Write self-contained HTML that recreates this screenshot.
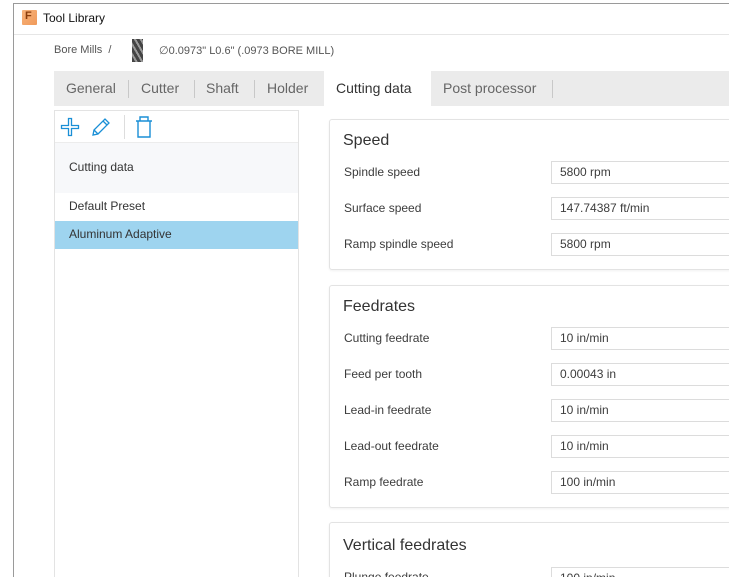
<!DOCTYPE html>
<html style="width:729px;height:577px;overflow:hidden"><head><style>
*{margin:0;padding:0;box-sizing:border-box}
body{width:729px;height:577px;overflow:hidden;background:#fff;font-family:"Liberation Sans",sans-serif;color:#3c3c3c;position:relative}
.abs{position:absolute}
.win{left:13px;top:3px;width:720px;height:580px;border:1px solid #9a9a9a;border-right:none;border-bottom:none;background:#fff}
.t{white-space:nowrap}
.tab{position:absolute;top:71px;height:35px;line-height:35px;font-size:14px;color:#666}
.sep{position:absolute;top:80px;width:1px;height:18px;background:#c8c8c8}
.card{position:absolute;left:329px;width:420px;border:1px solid #e3e3e3;border-radius:3px;background:#fff;box-shadow:0 1px 2px rgba(0,0,0,.06)}
.lbl{position:absolute;left:14px;font-size:12px;color:#3c3c3c}
.in{position:absolute;left:221px;width:200px;height:23px;border:1px solid #dcdcdc;font-size:12px;line-height:21px;padding-left:8px;color:#3c3c3c}
.h{position:absolute;left:13px;font-size:16px;color:#333}
</style></head><body>
<div class="abs win"></div>
<div class="abs" style="left:22px;top:10px;width:15px;height:15px;background:linear-gradient(135deg,#f7b27a,#f09a5a);border-radius:1px"></div>
<div class="abs t" style="left:25px;top:10px;font-size:11px;font-weight:bold;color:#8a3d0c">F</div>
<div class="abs t" style="left:43px;top:11px;font-size:12px;color:#111">Tool Library</div>
<div class="abs" style="left:14px;top:34px;width:715px;height:1px;background:#e6e6e6"></div>
<div class="abs t" style="left:54px;top:44px;font-size:11px;color:#555">Bore Mills &nbsp;/</div>
<div class="abs" style="left:132px;top:39px;width:11px;height:23px;background:repeating-linear-gradient(60deg,#444 0 3px,#999 3px 5px)"></div>
<div class="abs t" style="left:159px;top:44px;font-size:11px;color:#555">∅0.0973" L0.6" (.0973 BORE MILL)</div>
<div class="abs" style="left:54px;top:71px;width:675px;height:35px;background:#ebebeb"></div>
<div class="abs" style="left:324px;top:71px;width:107px;height:36px;background:#fff"></div>
<div class="tab" style="left:66px">General</div><div class="sep" style="left:128px"></div>
<div class="tab" style="left:141px">Cutter</div><div class="sep" style="left:194px"></div>
<div class="tab" style="left:206px">Shaft</div><div class="sep" style="left:254px"></div>
<div class="tab" style="left:267px">Holder</div>
<div class="tab" style="left:336px;color:#333">Cutting data</div>
<div class="tab" style="left:443px">Post processor</div><div class="sep" style="left:552px"></div>
<div class="abs" style="left:54px;top:110px;width:245px;height:480px;border:1px solid #e3e3e3;background:#fff"></div>
<svg class="abs" style="left:60px;top:116px" width="100" height="24" fill="none" stroke="#1a8fd6" stroke-width="1.3">
<path d="M8.5 2.5h3v7h7v3h-7v7h-3v-7h-7v-3h7z"/>
<path d="M33 19l1-5 11-11 4 4-11 11zM34 14l4 4M43 5l4 4"/>
</svg>
<div class="abs" style="left:124px;top:115px;width:1px;height:24px;background:#ddd"></div>
<svg class="abs" style="left:134px;top:115px" width="20" height="24" fill="none" stroke="#1a8fd6" stroke-width="1.4"><path d="M2 6h16M6 6V2h8v4M4 6v16h12V6"/></svg>
<div class="abs" style="left:55px;top:142px;width:243px;height:51px;background:#f7f8fa;border-top:1px solid #ececec"></div>
<div class="abs t" style="left:69px;top:160px;font-size:12px;color:#333">Cutting data</div>
<div class="abs t" style="left:69px;top:199px;font-size:12px;color:#333">Default Preset</div>
<div class="abs" style="left:55px;top:221px;width:243px;height:28px;background:#9ed4ef"></div>
<div class="abs t" style="left:69px;top:227px;font-size:12px;color:#333">Aluminum Adaptive</div>
<div class="card" style="top:119px;height:151px">
<div class="h" style="top:12px">Speed</div>
<div class="lbl" style="top:45px">Spindle speed</div><div class="in" style="top:41px">5800 rpm</div>
<div class="lbl" style="top:81px">Surface speed</div><div class="in" style="top:77px">147.74387 ft/min</div>
<div class="lbl" style="top:117px">Ramp spindle speed</div><div class="in" style="top:113px">5800 rpm</div>
</div>
<div class="card" style="top:285px;height:223px">
<div class="h" style="top:12px">Feedrates</div>
<div class="lbl" style="top:45px">Cutting feedrate</div><div class="in" style="top:41px">10 in/min</div>
<div class="lbl" style="top:81px">Feed per tooth</div><div class="in" style="top:77px">0.00043 in</div>
<div class="lbl" style="top:117px">Lead-in feedrate</div><div class="in" style="top:113px">10 in/min</div>
<div class="lbl" style="top:153px">Lead-out feedrate</div><div class="in" style="top:149px">10 in/min</div>
<div class="lbl" style="top:189px">Ramp feedrate</div><div class="in" style="top:185px">100 in/min</div>
</div>
<div class="card" style="top:522px;height:70px">
<div class="h" style="top:14px">Vertical feedrates</div>
<div class="lbl" style="top:47px">Plunge feedrate</div><div class="in" style="top:44px">100 in/min</div>
</div>
</body></html>
